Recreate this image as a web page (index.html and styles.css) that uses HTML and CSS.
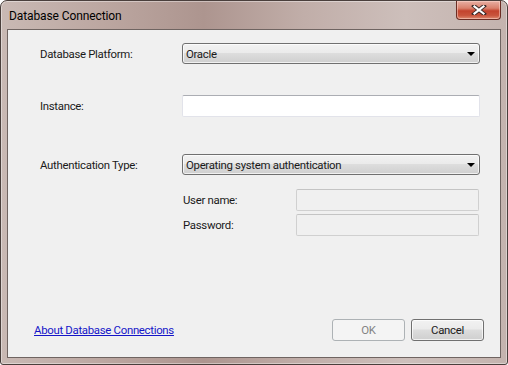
FILE: index.html
```html
<!DOCTYPE html>
<html>
<head>
<meta charset="utf-8">
<link rel="stylesheet" href="styles.css">
</head>
<body>
<div class="window">
  <div class="titlebar">
    <span class="title">Database Connection</span>
    <div class="close">
      <svg width="16" height="10" viewBox="0 0 16 10">
        <path d="M3 1 L13 9 M13 1 L3 9" stroke="#3a2a28" stroke-width="4" stroke-linecap="square"/>
        <path d="M3.5 1.5 L12.5 8.5 M12.5 1.5 L3.5 8.5" stroke="#ffffff" stroke-width="2.2" stroke-linecap="square"/>
      </svg>
    </div>
  </div>
  <div class="client">
    <div class="row row-platform">
      <span class="label">Database Platform:</span>
      <div class="select"><span>Oracle</span><i class="arrow"></i></div>
    </div>
    <div class="row row-instance">
      <span class="label">Instance:</span>
      <div class="textbox"></div>
    </div>
    <div class="row row-auth">
      <span class="label">Authentication Type:</span>
      <div class="select"><span>Operating system authentication</span><i class="arrow"></i></div>
    </div>
    <div class="subrow subrow-user">
      <span class="sublabel">User name:</span>
      <div class="textbox disabled"></div>
    </div>
    <div class="subrow subrow-pass">
      <span class="sublabel">Password:</span>
      <div class="textbox disabled"></div>
    </div>
    <div class="spacer"></div>
    <div class="footer">
      <a class="link" href="#">About Database Connections</a>
      <div class="buttons">
        <div class="btn btn-disabled">OK</div>
        <div class="btn">Cancel</div>
      </div>
    </div>
  </div>
</div>
</body>
</html>
```

FILE: styles.css
```css
html, body {
  margin: 0;
  padding: 0;
  background: #ffffff;
}
body {
  font-family: Roboto, "Noto Sans", sans-serif;
  font-size: 11.4px;
  letter-spacing: -0.3px;
  color: #1a1a1a;
}
.window {
  width: 508px;
  height: 365px;
  box-sizing: border-box;
  border: 1px solid #4a3f3c;
  border-radius: 7px 7px 3px 3px;
  background: linear-gradient(90deg, #c9b9b4 0%, #bca7a1 20%, #ad958f 40%, #c1aea9 60%, #cdbfbb 80%, #c4b3ae 100%);
  padding: 0 6px 6px 6px;
  display: flex;
  flex-direction: column;
  box-shadow: inset 0 0 0 1px rgba(255,255,255,0.4);
}
.titlebar {
  height: 28px;
  display: flex;
  align-items: flex-start;
  justify-content: space-between;
}
.title {
  margin-top: 7px;
  margin-left: 2px;
  line-height: 16px;
  font-size: 12px;
  letter-spacing: -0.1px;
  color: #000;
}
.close {
  width: 45px;
  height: 19px;
  box-sizing: border-box;
  border: 1px solid #6b2d24;
  border-top: none;
  border-radius: 0 0 4px 4px;
  background: linear-gradient(180deg, #e8b0a4 0%, #d9806c 40%, #c3432d 55%, #c9543c 80%, #dd8a70 100%);
  display: flex;
  align-items: center;
  justify-content: center;
  box-shadow: inset 0 0 0 1px rgba(255,220,210,0.5);
}
.close svg { display: block; }
.client {
  flex: 1;
  background: #f0f0f0;
  border: 1px solid #6f6461;
  display: flex;
  flex-direction: column;
  padding: 13px 0 16px 0;
}
.row {
  display: flex;
  align-items: center;
  padding-left: 32px;
}
.label {
  width: 142px;
  flex: none;
}
.row-instance { margin-top: 31px; }
.row-auth { margin-top: 37px; }
.select {
  width: 298px;
  height: 21px;
  box-sizing: border-box;
  border: 1px solid #707070;
  border-radius: 3px;
  background: linear-gradient(180deg, #f2f2f2 0%, #ebebeb 45%, #dddddd 50%, #cfcfcf 100%);
  box-shadow: inset 0 0 0 1px rgba(255,255,255,0.7);
  display: flex;
  align-items: center;
  justify-content: space-between;
  padding: 0 4px 0 3px;
}
.arrow {
  width: 0;
  height: 0;
  border-left: 4px solid transparent;
  border-right: 4px solid transparent;
  border-top: 4px solid #000;
}
.textbox {
  width: 298px;
  height: 22px;
  box-sizing: border-box;
  background: #ffffff;
  border: 1px solid #e2e3ea;
  border-top-color: #abadb3;
  border-radius: 2px;
}
.subrow {
  display: flex;
  align-items: center;
  padding-left: 175px;
}
.subrow-user { margin-top: 14px; }
.subrow-pass { margin-top: 3px; }
.sublabel {
  width: 113px;
  flex: none;
}
.textbox.disabled {
  width: 183px;
  background: #f0f0f0;
  border: 1px solid #d0d0d0;
  border-top-color: #c4c4c4;
}
.spacer { flex: 1; }
.footer {
  display: flex;
  align-items: center;
  justify-content: space-between;
  padding-left: 26px;
  padding-right: 16px;
}
.link {
  color: #1515c8;
  text-decoration: underline;
}
.buttons {
  display: flex;
  gap: 6px;
}
.btn {
  width: 73px;
  height: 22px;
  box-sizing: border-box;
  border: 1px solid #707070;
  border-radius: 3px;
  background: linear-gradient(180deg, #f2f2f2 0%, #ebebeb 45%, #dddddd 50%, #cfcfcf 100%);
  box-shadow: inset 0 0 0 1px rgba(255,255,255,0.7);
  display: flex;
  align-items: center;
  justify-content: center;
}
.btn-disabled {
  border-color: #adb2b5;
  background: #f4f4f4;
  color: #838383;
  box-shadow: none;
}
```
